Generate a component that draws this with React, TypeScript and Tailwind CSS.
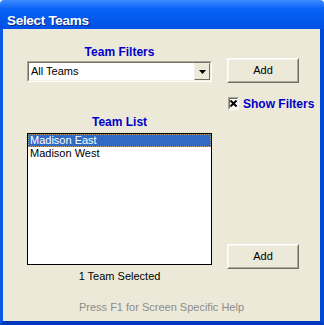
import React from 'react';

const font = { fontFamily: '"Liberation Sans", Arial, sans-serif' };

function XpButton({ label }: { label: string }) {
  return (
    <button className="h-[25px] w-[72px] border border-t-white border-l-white border-b-[#716f64] border-r-[#716f64] bg-[#ece9d8] text-[11px] text-black">
      <div className="flex h-full w-full items-center justify-center border border-t-[#f5f4ee] border-l-[#f5f4ee] border-b-[#aca899] border-r-[#aca899]">
        {label}
      </div>
    </button>
  );
}

function ComboBox({ value }: { value: string }) {
  return (
    <div className="h-[21px] w-[185px] border border-t-[#aca899] border-l-[#aca899] border-b-white border-r-white">
      <div className="flex h-full w-full items-stretch border border-t-[#716f64] border-l-[#716f64] border-b-[#f1efe2] border-r-[#f1efe2] bg-white">
        <span className="flex-1 pl-[2px] text-[11px] leading-[17px] text-black">{value}</span>
        <div className="flex w-[16px] items-center justify-center border border-t-[#f1efe2] border-l-[#f1efe2] border-b-[#716f64] border-r-[#716f64] bg-[#ece9d8]">
          <svg width="7" height="4" viewBox="0 0 7 4">
            <path d="M0 0H7L3.5 4Z" fill="#000" />
          </svg>
        </div>
      </div>
    </div>
  );
}

function Checkbox({ checked }: { checked: boolean }) {
  return (
    <div className="h-[13px] w-[13px] border border-t-[#aca899] border-l-[#aca899] border-b-white border-r-white">
      <div className="flex h-full w-full items-center justify-center border border-t-[#716f64] border-l-[#716f64] border-b-[#f1efe2] border-r-[#f1efe2] bg-white">
        {checked && (
          <svg width="7" height="7" viewBox="0 0 7 7">
            <path d="M0.5 0.5L6.5 6.5M6.5 0.5L0.5 6.5" stroke="#000" strokeWidth="2" />
          </svg>
        )}
      </div>
    </div>
  );
}

export default function App() {
  const teams = ['Madison East', 'Madison West'];
  const selected = 0;

  return (
    <div className="flex h-[325px] w-[324px] flex-col select-none" style={font}>
      <div className="h-[29px] rounded-t-[4px] bg-gradient-to-b from-[#3b8cff] via-[#0862f6] via-30% to-[#0050e4] pl-[7px] pt-[8px]">
        <span className="text-[13.5px] font-bold leading-[16px] tracking-[-0.3px] text-white [text-shadow:1px_1px_0_#0a2a8a]">
          Select Teams
        </span>
      </div>

      <div className="flex flex-1 flex-col border-l-[3px] border-r-[4px] border-b-[4px] border-l-[#0a5ae8] border-r-[#0048d6] border-b-[#0038bc] bg-[#ece9d8]">
        <div className="flex gap-[15px] pl-[24px]">
          <div className="flex w-[185px] flex-col">
            <div className="mt-[16px] text-center text-[12px] font-bold leading-[14px] text-[#0000cc]">
              Team Filters
            </div>
            <div className="mt-[2px]">
              <ComboBox value="All Teams" />
            </div>
            <div className="mt-[33px] text-center text-[12px] font-bold leading-[14px] text-[#0000cc]">
              Team List
            </div>
            <div className="mt-[4px] h-[132px] w-[185px] border border-black bg-white">
              {teams.map((t, i) => (
                <div
                  key={t}
                  className={
                    i === selected
                      ? 'h-[13px] border border-dotted border-[#b8a070] bg-[#316ac5] pl-[1px] text-[11px] leading-[11px] text-white'
                      : 'h-[13px] pl-[2px] text-[11px] leading-[13px] text-black'
                  }
                >
                  {t}
                </div>
              ))}
            </div>
            <div className="mt-[5px] text-center text-[11px] leading-[13px] text-black">
              1 Team Selected
            </div>
          </div>

          <div className="flex w-[72px] flex-col">
            <div className="mt-[28px]">
              <XpButton label="Add" />
            </div>
            <div className="ml-[1px] mt-[14px] flex items-center gap-[4px] whitespace-nowrap">
              <Checkbox checked />
              <span className="text-[12px] font-bold leading-[14px] text-[#0000cc]">Show Filters</span>
            </div>
            <div className="mt-[132px]">
              <XpButton label="Add" />
            </div>
          </div>
        </div>

        <div className="mt-[18px] text-center text-[11px] leading-[13px] text-[#8c8c8c]">
          Press F1 for Screen Specific Help
        </div>
      </div>
    </div>
  );
}
